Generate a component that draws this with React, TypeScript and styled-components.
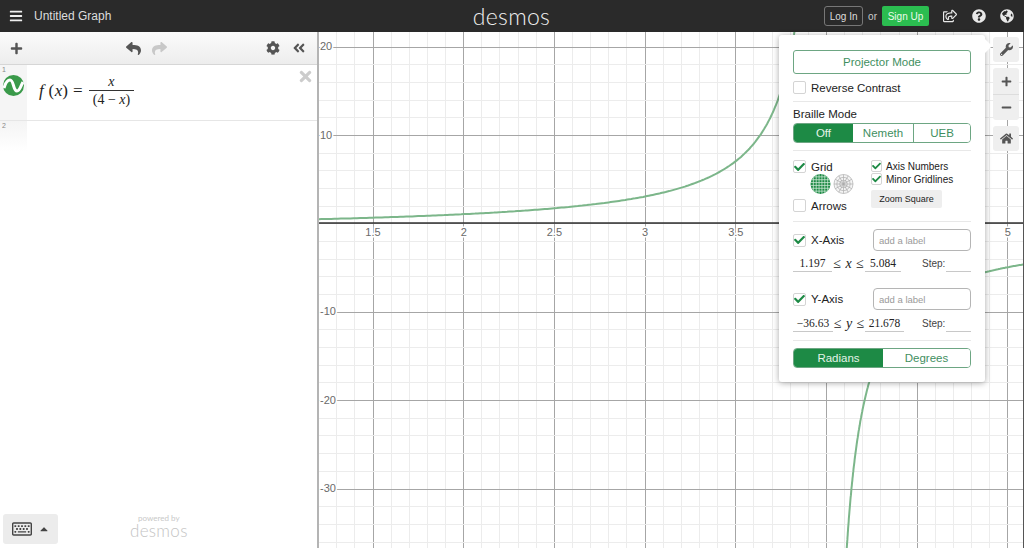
import React from 'react'
import styled, { createGlobalStyle } from 'styled-components'
import {
  FaAngleDoubleLeft,
  FaBars,
  FaCaretUp,
  FaCheck,
  FaCog,
  FaGlobeAmericas,
  FaHome,
  FaMinus,
  FaPlus,
  FaQuestionCircle,
  FaRegKeyboard,
  FaRegShareSquare,
  FaReply,
  FaShare,
  FaTimes,
  FaWrench,
} from 'react-icons/fa'

const GREEN = '#1d8a45'
const SANS = '"Liberation Sans", Arial, sans-serif'
const SERIF = '"Liberation Serif", "Times New Roman", serif'

const GlobalStyle = createGlobalStyle`
  html, body {
    margin: 0;
    padding: 0;
    overflow: hidden;
    background: #fff;
    font-family: ${SANS};
  }
  * { box-sizing: border-box; }
`

const Page = styled.div`
  position: relative;
  width: 1024px;
  height: 548px;
  display: flex;
  flex-direction: column;
  overflow: hidden;
`

/* header */
const Header = styled.header`
  height: 32px;
  flex: none;
  display: flex;
  align-items: center;
  background: #2a2a2a;
  color: #eee;
  padding: 0 10px 0 9px;
`
const HeaderLeft = styled.div`
  flex: 1;
  display: flex;
  align-items: center;
  gap: 11px;
  font-size: 12px;
  color: #ddd;
  svg { font-size: 14px; color: #eee; }
`
const Logo = styled.div<{ $small?: boolean }>`
  font-family: Lato, "Open Sans", sans-serif;
  font-weight: 300;
  font-size: ${(p) => (p.$small ? '17px' : '23px')};
  line-height: ${(p) => (p.$small ? '15px' : '1')};
  letter-spacing: 0.3px;
  color: ${(p) => (p.$small ? '#c4c4c4' : '#f0f0f0')};
`
const HeaderRight = styled.div`
  flex: 1;
  display: flex;
  align-items: center;
  justify-content: flex-end;
  font-size: 10px;
  color: #ccc;
`
const LogIn = styled.div`
  width: 39px;
  height: 20px;
  border: 1px solid #777;
  border-radius: 3px;
  display: flex;
  align-items: center;
  justify-content: center;
  color: #ddd;
  margin-right: 5px;
`
const SignUp = styled.div`
  width: 47px;
  height: 20px;
  border-radius: 2px;
  background: #2bbd50;
  color: #eafbe9;
  display: flex;
  align-items: center;
  justify-content: center;
  margin-left: 5px;
  margin-right: 14px;
`
const HeaderIcons = styled.div`
  display: flex;
  align-items: center;
  gap: 14.5px;
  svg { font-size: 14px; color: #e8e8e8; display: block; }
`

/* main area */
const Main = styled.div`
  flex: 1;
  display: flex;
  min-height: 0;
`
const Sidebar = styled.aside`
  width: 319px;
  flex: none;
  display: flex;
  flex-direction: column;
  border-right: 2px solid #b4b4b4;
  background: #fff;
`
const Toolbar = styled.div`
  height: 33px;
  flex: none;
  display: grid;
  grid-template-columns: 100px 72px 1fr;
  align-items: center;
  padding: 0 11px 0 10px;
  background: linear-gradient(#fbfbfb, #ededed);
  border-bottom: 1px solid #d6d6d6;
`
const ToolGroup = styled.div<{ $align: string; $gap: number }>`
  display: flex;
  align-items: center;
  justify-content: ${(p) => p.$align};
  gap: ${(p) => p.$gap}px;
  color: #555;
  svg { display: block; }
`
const Faint = styled.span`
  color: #c8c8c8;
  display: flex;
`
const ExprList = styled.div`
  flex: 1;
  display: flex;
  flex-direction: column;
  position: relative;
`
const ExprRow = styled.div<{ $tall?: boolean }>`
  display: flex;
  height: ${(p) => (p.$tall ? '56px' : '30px')};
  border-bottom: ${(p) => (p.$tall ? '1px solid #e6e6e6' : 'none')};
`
const Gutter = styled.div<{ $fade?: boolean }>`
  width: 27px;
  flex: none;
  position: relative;
  background: ${(p) => (p.$fade ? 'linear-gradient(#f4f4f4, #fff)' : '#f5f5f5')};
`
const RowNumber = styled.span`
  position: absolute;
  top: 1px;
  left: 2px;
  font-size: 7px;
  color: #888;
`
const ExprIcon = styled.svg`
  position: absolute;
  left: 3px;
  top: 10px;
`
const MathLine = styled.div`
  flex: 1;
  display: flex;
  align-items: center;
  padding: 0 0 4px 12px;
  font-family: ${SERIF};
  font-size: 17px;
  color: #222;
  position: relative;
`
const Italic = styled.i`
  font-family: ${SERIF};
`
const MathText = styled.span`
  white-space: pre;
  letter-spacing: 0.5px;
`
const Fraction = styled.span`
  display: inline-flex;
  flex-direction: column;
  align-items: center;
  width: 45px;
  margin-left: 1px;
  font-size: 14px;
  line-height: 15px;
`
const Numerator = styled.span`
  width: 100%;
  text-align: center;
  border-bottom: 1px solid #333;
  padding-bottom: 1px;
`
const Denominator = styled.span`
  white-space: pre;
  padding-top: 1px;
`
const RemoveButton = styled.div`
  position: absolute;
  top: 3px;
  right: 3px;
  color: #ccc;
  font-size: 17px;
  display: flex;
`
const SidebarFooter = styled.div`
  height: 34px;
  flex: none;
  display: flex;
  align-items: flex-start;
  padding: 0 0 0 3px;
`
const KeyboardButton = styled.div`
  width: 55px;
  height: 30px;
  background: #ececec;
  border-radius: 3px;
  display: flex;
  align-items: center;
  justify-content: center;
  gap: 6px;
  color: #444;
  svg:first-child { font-size: 20px; }
  svg:last-child { font-size: 12px; }
`
const PoweredBy = styled.div`
  margin-left: 72px;
  display: flex;
  flex-direction: column;
  align-items: center;
  color: #c8c8c8;
  font-size: 8px;
  line-height: 9px;
  font-family: Lato, sans-serif;
`

/* graph */
const GraphPane = styled.div`
  flex: 1;
  position: relative;
  min-width: 0;
  border-right: 1px solid #555;
`
const GraphSvg = styled.svg`
  display: block;
  width: 100%;
  height: 100%;
`
const AxisLabel = styled.text`
  font-family: ${SANS};
  font-size: 11px;
  fill: #6a6a6a;
  paint-order: stroke;
  stroke: #fff;
  stroke-width: 3px;
`

/* settings popover */
const Popover = styled.div`
  position: absolute;
  left: 460px;
  top: 3px;
  width: 206px;
  height: 347px;
  background: #fff;
  border-radius: 3px;
  box-shadow: 0 1px 6px rgba(0, 0, 0, 0.35);
  padding: 15px 14px 0;
  color: #222;
  font-size: 11.5px;
  &::after {
    content: '';
    position: absolute;
    right: -5px;
    top: 6px;
    width: 10px;
    height: 10px;
    background: #fff;
    transform: rotate(45deg);
  }
`
const OutlineButton = styled.div`
  height: 24px;
  margin-bottom: 7px;
  border: 1px solid #6da683;
  border-radius: 3px;
  display: flex;
  align-items: center;
  justify-content: center;
  color: #3f8f5f;
`
const CheckRow = styled.div<{ $small?: boolean }>`
  display: flex;
  align-items: center;
  gap: ${(p) => (p.$small ? '4px' : '5px')};
  font-size: ${(p) => (p.$small ? '10px' : '11.5px')};
  white-space: nowrap;
`
const Box = styled.span<{ $small?: boolean }>`
  width: ${(p) => (p.$small ? '11px' : '13px')};
  height: ${(p) => (p.$small ? '12px' : '13px')};
  flex: none;
  border: 1px solid #d4d4d4;
  border-radius: 2px;
  background: #fff;
  display: flex;
  align-items: center;
  justify-content: center;
  color: ${GREEN};
  font-size: 12px;
`
const Divider = styled.div<{ $top: number; $bottom: number }>`
  height: 1px;
  background: #e8e8e8;
  margin: ${(p) => p.$top}px 0 ${(p) => p.$bottom}px;
`
const SectionTitle = styled.div`
  line-height: 14px;
  margin-bottom: 2px;
`
const Segments = styled.div<{ $columns: string }>`
  display: grid;
  grid-template-columns: ${(p) => p.$columns};
  height: 20px;
  border: 1px solid #6da683;
  border-radius: 4px;
  overflow: hidden;
`
const Segment = styled.div<{ $on?: boolean }>`
  display: flex;
  align-items: center;
  justify-content: center;
  background: ${(p) => (p.$on ? GREEN : '#fff')};
  color: ${(p) => (p.$on ? '#e4f3e8' : '#3f8f5f')};
  border-left: ${(p) => (p.$on ? 'none' : '1px solid #6da683')};
  &:nth-child(2) { border-left: none; }
`
const GridOptions = styled.div`
  display: grid;
  grid-template-columns: 78px 1fr;
`
const GridColumn = styled.div`
  display: flex;
  flex-direction: column;
`
const Thumbs = styled.div`
  display: flex;
  gap: 2px;
  margin: 1px 0 5px 17px;
  svg { display: block; }
`
const OptionsColumn = styled.div`
  display: flex;
  flex-direction: column;
  align-items: flex-start;
  gap: 1px;
`
const ZoomSquare = styled.div`
  width: 71px;
  height: 18px;
  margin-top: 4px;
  background: #eeeeee;
  border-radius: 2px;
  font-size: 9px;
  display: flex;
  align-items: center;
  justify-content: center;
`
const AxisRow = styled.div`
  display: flex;
  align-items: center;
  justify-content: space-between;
  height: 22px;
`
const LabelInput = styled.div`
  width: 98px;
  height: 22px;
  border: 1px solid #b5b5b5;
  border-radius: 4px;
  padding-left: 5px;
  display: flex;
  align-items: center;
  color: #9a9a9a;
  font-size: 9.5px;
`
const BoundsRow = styled.div<{ $bottom: number; $top: number }>`
  display: flex;
  align-items: flex-end;
  height: 21px;
  margin: ${(p) => p.$top}px 0 ${(p) => p.$bottom}px;
  font-family: ${SERIF};
  font-size: 11.5px;
  white-space: nowrap;
`
const BoundField = styled.span<{ $width: number }>`
  width: ${(p) => p.$width}px;
  height: 19px;
  line-height: 21px;
  border-bottom: 1px solid #c8c8c8;
  text-align: center;
  overflow: hidden;
`
const Relation = styled.span<{ $width: number }>`
  width: ${(p) => p.$width}px;
  height: 19px;
  line-height: 21px;
  text-align: center;
  font-size: 14px;
  word-spacing: 1px;
  white-space: nowrap;
`
const StepLabel = styled.span`
  margin-left: auto;
  width: 24px;
  height: 19px;
  line-height: 22px;
  font-family: ${SANS};
  font-size: 10px;
  color: #444;
`
const StepField = styled.span`
  width: 25px;
  height: 19px;
  border-bottom: 1px solid #c8c8c8;
`

/* graph buttons */
const GraphButtons = styled.div`
  position: absolute;
  top: 5px;
  right: 4px;
  width: 26px;
  display: flex;
  flex-direction: column;
  gap: 6px;
`
const ButtonStack = styled.div`
  display: flex;
  flex-direction: column;
  background: #efefef;
  border-radius: 3px;
  color: #555;
`
const GraphButton = styled.div<{ $h: number; $split?: boolean }>`
  height: ${(p) => p.$h}px;
  display: flex;
  align-items: center;
  justify-content: center;
  font-size: 11px;
  border-top: ${(p) => (p.$split ? '1px solid #ddd' : 'none')};
`

// graph mapping, measured from the gridlines in the picture
const pxX = (x: number) => 373 + (x - 1.5) * 181.4
const pxY = (y: number) => 223 - y * 8.84
const f = (x: number) => x / (4 - x)
const crisp = (v: number) => Math.floor(v) + 0.5

function curvePath(from: number, to: number) {
  const pts: string[] = []
  for (let i = 0; i <= 300; i++) {
    // bunch the samples up near the asymptote at x = 4
    const t = i / 300
    const x = from < 4 ? from + (to - from) * (1 - (1 - t) * (1 - t)) : to - (to - from) * (1 - t * t)
    pts.push(`${pxX(x).toFixed(1)},${pxY(f(x)).toFixed(1)}`)
  }
  return 'M' + pts.join('L')
}

function Graph() {
  const verticals: React.ReactNode[] = []
  for (let i = -2; i <= 36; i++) {
    const x = crisp(373 + i * 18.14)
    const major = i % 5 === 0
    verticals.push(
      <line key={i} x1={x} x2={x} y1={32} y2={548} stroke={major ? '#a6a6a6' : '#ececec'} strokeWidth={1} />,
    )
  }
  const horizontals: React.ReactNode[] = []
  for (let i = -2; i <= 29; i++) {
    const y = crisp(47 + i * 17.68)
    const major = i % 5 === 0
    horizontals.push(
      <line key={i} x1={319} x2={1024} y1={y} y2={y} stroke={major ? '#a6a6a6' : '#ececec'} strokeWidth={1} />,
    )
  }
  // 4 and 4.5 sit behind the settings popover
  const xLabels = ['1.5', '2', '2.5', '3', '3.5', '5']
  const yLabels: [string, number][] = [
    ['20', 20],
    ['10', 10],
    ['-10', -10],
    ['-20', -20],
    ['-30', -30],
  ]
  return (
    <GraphSvg viewBox="319 32 704 516">
      {verticals}
      {horizontals}
      <line x1={319} x2={1024} y1={223} y2={223} stroke="#333" strokeWidth={1.5} />
      {xLabels.map((l) => (
        <AxisLabel key={l} x={pxX(parseFloat(l))} y={236} textAnchor="middle">
          {l}
        </AxisLabel>
      ))}
      {yLabels.map(([l, v]) => (
        <AxisLabel key={l} x={320} y={pxY(v) + 4}>
          {l}
        </AxisLabel>
      ))}
      <path d={curvePath(1.197, 3.93)} fill="none" stroke="#7cb68a" strokeWidth={2} />
      <path d={curvePath(4.1, 5.084)} fill="none" stroke="#7cb68a" strokeWidth={2} />
    </GraphSvg>
  )
}

function CartesianThumb() {
  const lines = [3, 6, 9, 12, 15, 18]
  return (
    <svg width="21" height="20" viewBox="0 0 21 21">
      <defs>
        <clipPath id="thumb-clip">
          <circle cx="10.5" cy="10.5" r="10.5" />
        </clipPath>
      </defs>
      <circle cx="10.5" cy="10.5" r="10.5" fill={GREEN} />
      <g clipPath="url(#thumb-clip)" stroke="#cfe8d6" strokeWidth="0.8">
        {lines.map((v) => (
          <React.Fragment key={v}>
            <line x1={v} x2={v} y1={0} y2={21} />
            <line y1={v} y2={v} x1={0} x2={21} />
          </React.Fragment>
        ))}
      </g>
    </svg>
  )
}

function PolarThumb() {
  const spokes = [0, 30, 60, 90, 120, 150]
  return (
    <svg width="21" height="20" viewBox="0 0 21 21" fill="none" stroke="#aaa" strokeWidth="0.7">
      <circle cx="10.5" cy="10.5" r="10" fill="#f4f4f4" />
      <circle cx="10.5" cy="10.5" r="7" />
      <circle cx="10.5" cy="10.5" r="4" />
      {spokes.map((a) => (
        <line key={a} x1="10.5" y1="0.5" x2="10.5" y2="20.5" transform={`rotate(${a} 10.5 10.5)`} />
      ))}
    </svg>
  )
}

function Check({ on, small, children }: { on?: boolean; small?: boolean; children: React.ReactNode }) {
  return (
    <CheckRow $small={small}>
      <Box $small={small}>{on && <FaCheck />}</Box>
      {children}
    </CheckRow>
  )
}

interface BoundsProps {
  low: string
  high: string
  v: string
  w: [number, number, number]
  top: number
  bottom: number
}

function Bounds({ low, high, v, w, top, bottom }: BoundsProps) {
  return (
    <BoundsRow $top={top} $bottom={bottom}>
      <BoundField $width={w[0]}>{low}</BoundField>
      <Relation $width={w[1]}>
        ≤ <Italic>{v}</Italic> ≤
      </Relation>
      <BoundField $width={w[2]}>{high}</BoundField>
      <StepLabel>Step:</StepLabel>
      <StepField />
    </BoundsRow>
  )
}

function Settings() {
  return (
    <Popover>
      <OutlineButton>Projector Mode</OutlineButton>
      <Check>Reverse Contrast</Check>
      <Divider $top={7} $bottom={5} />
      <SectionTitle>Braille Mode</SectionTitle>
      <Segments $columns="59px 60px 1fr">
        <Segment $on>Off</Segment>
        <Segment>Nemeth</Segment>
        <Segment>UEB</Segment>
      </Segments>
      <Divider $top={7} $bottom={9} />
      <GridOptions>
        <GridColumn>
          <Check on>Grid</Check>
          <Thumbs>
            <CartesianThumb />
            <PolarThumb />
          </Thumbs>
          <Check>Arrows</Check>
        </GridColumn>
        <OptionsColumn>
          <Check on small>
            Axis Numbers
          </Check>
          <Check on small>
            Minor Gridlines
          </Check>
          <ZoomSquare>Zoom Square</ZoomSquare>
        </OptionsColumn>
      </GridOptions>
      <Divider $top={9} $bottom={7} />
      <AxisRow>
        <Check on>X-Axis</Check>
        <LabelInput>add a label</LabelInput>
      </AxisRow>
      <Bounds low="1.197" high="5.084" v="x" w={[39, 33, 36]} top={0} bottom={16} />
      <AxisRow>
        <Check on>Y-Axis</Check>
        <LabelInput>add a label</LabelInput>
      </AxisRow>
      <Bounds low="−36.63" high="21.678" v="y" w={[40, 32, 39]} top={1} bottom={0} />
      <Divider $top={8} $bottom={7} />
      <Segments $columns="89px 1fr">
        <Segment $on>Radians</Segment>
        <Segment>Degrees</Segment>
      </Segments>
    </Popover>
  )
}

export default function App() {
  return (
    <Page>
      <GlobalStyle />
      <Header>
        <HeaderLeft>
          <FaBars />
          Untitled Graph
        </HeaderLeft>
        <Logo>desmos</Logo>
        <HeaderRight>
          <LogIn>Log In</LogIn>
          or
          <SignUp>Sign Up</SignUp>
          <HeaderIcons>
            <FaRegShareSquare />
            <FaQuestionCircle />
            <FaGlobeAmericas />
          </HeaderIcons>
        </HeaderRight>
      </Header>
      <Main>
        <Sidebar>
          <Toolbar>
            <ToolGroup $align="flex-start" $gap={0}>
              <FaPlus size={13} />
            </ToolGroup>
            <ToolGroup $align="center" $gap={11}>
              <FaReply size={15} />
              <Faint>
                <FaShare size={15} />
              </Faint>
            </ToolGroup>
            <ToolGroup $align="flex-end" $gap={12}>
              <FaCog size={14} />
              <FaAngleDoubleLeft size={14} />
            </ToolGroup>
          </Toolbar>
          <ExprList>
            <ExprRow $tall>
              <Gutter>
                <RowNumber>1</RowNumber>
                <ExprIcon width="21" height="21" viewBox="0 0 21 21">
                  <circle cx="10.5" cy="10.5" r="10.5" fill="#3a9a4a" />
                  <path
                    d="M1 13C3 6 5 5 7 5C11 5 10 16 14 16C17 16 18 10 20 7"
                    fill="none"
                    stroke="#fff"
                    strokeWidth="3"
                  />
                </ExprIcon>
              </Gutter>
              <MathLine>
                <Italic>f</Italic>
                <MathText> (</MathText>
                <Italic>x</Italic>
                <MathText>) = </MathText>
                <Fraction>
                  <Numerator>
                    <Italic>x</Italic>
                  </Numerator>
                  <Denominator>
                    (4 − <Italic>x</Italic>)
                  </Denominator>
                </Fraction>
                <RemoveButton>
                  <FaTimes />
                </RemoveButton>
              </MathLine>
            </ExprRow>
            <ExprRow>
              <Gutter $fade>
                <RowNumber>2</RowNumber>
              </Gutter>
            </ExprRow>
          </ExprList>
          <SidebarFooter>
            <KeyboardButton>
              <FaRegKeyboard />
              <FaCaretUp />
            </KeyboardButton>
            <PoweredBy>
              powered by
              <Logo $small>desmos</Logo>
            </PoweredBy>
          </SidebarFooter>
        </Sidebar>
        <GraphPane>
          <Graph />
          <Settings />
          <GraphButtons>
            <ButtonStack>
              <GraphButton $h={25}>
                <FaWrench size={13} />
              </GraphButton>
            </ButtonStack>
            <ButtonStack>
              <GraphButton $h={26}>
                <FaPlus />
              </GraphButton>
              <GraphButton $h={26} $split>
                <FaMinus />
              </GraphButton>
            </ButtonStack>
            <ButtonStack>
              <GraphButton $h={25}>
                <FaHome size={13} />
              </GraphButton>
            </ButtonStack>
          </GraphButtons>
        </GraphPane>
      </Main>
    </Page>
  )
}
